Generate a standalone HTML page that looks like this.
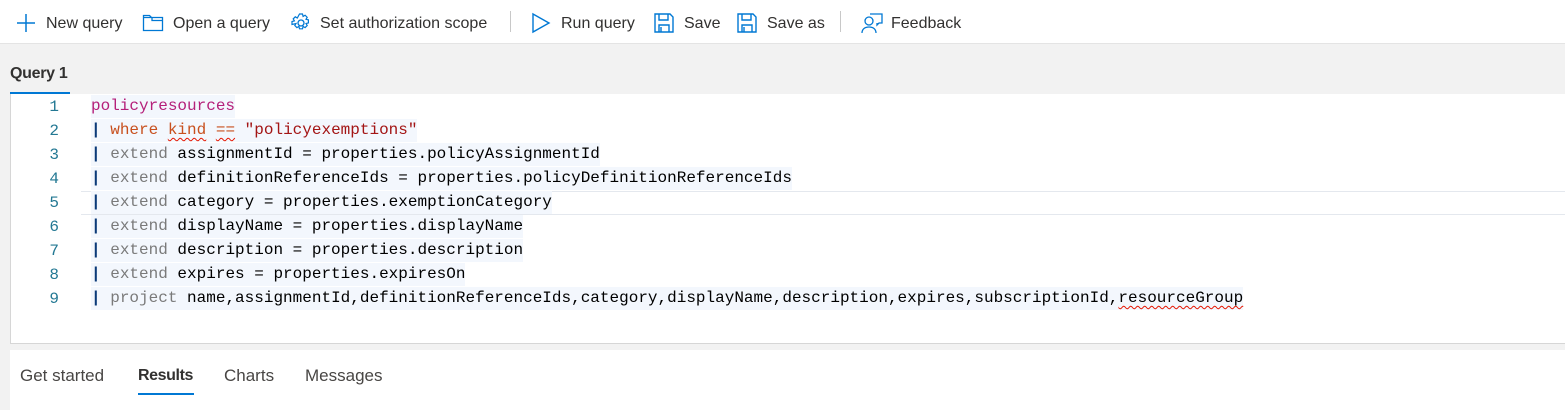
<!DOCTYPE html>
<html><head><meta charset="utf-8"><style>
*{margin:0;padding:0;box-sizing:border-box}
body{width:1565px;height:407px;background:#f2f2f2;position:relative;overflow:hidden;font-family:"Liberation Sans",sans-serif;color:#323130}
.tb{position:absolute;left:0;top:0;width:1565px;height:44px;background:#fff;border-bottom:1px solid #e4e4e4}
.it{position:absolute;top:15px;font-size:16px;color:#323130;white-space:nowrap}
.ic{position:absolute;top:12px}
.sep{position:absolute;top:11px;width:1px;height:21px;background:#c8c8c8}
.q1{position:absolute;left:10px;top:65px;font-size:16px;font-weight:bold;color:#323130;letter-spacing:-0.3px}
.q1u{position:absolute;left:10px;top:92px;width:60px;height:2px;background:#0078d4}
.ed{position:absolute;left:10px;top:94px;width:1560px;height:250px;background:#fff;border:1px solid #d6d6d6;border-top:none;border-right:none}
.ln{position:absolute;left:0;width:48px;text-align:right;font-family:"Liberation Mono",monospace;font-size:16px;color:#237893;line-height:24px}
.cl{position:absolute;left:80px;font-family:"Liberation Mono",monospace;font-size:16px;line-height:23px;white-space:pre;background:#f3f7fd;color:#000}
.cur{position:absolute;left:70px;right:0;top:97px;height:24px;border-top:1px solid #e4e8ee;border-bottom:1px solid #e4e8ee}
.p{color:#0b3a78;font-weight:bold}.g{color:#7a7a7a}.k{color:#b5207a}.o{color:#c8501e}.s{color:#a31515}
.sq{text-decoration:underline wavy #e51400;text-decoration-thickness:1px;text-underline-offset:3px}
.bp{position:absolute;left:10px;top:350px;width:1560px;height:60px;background:#fff}
.bt{position:absolute;top:366px;font-size:17px;color:#484644}
.w{position:absolute;left:0;top:1px;right:0;bottom:0}
</style></head><body>
<div class="tb">
<svg class="ic" style="left:15px" width="22" height="22" viewBox="0 0 22 22"><path d="M11 2v18M2 11h18" stroke="#0078d4" stroke-width="1.5"/></svg>
<span class="it" style="left:46px">New query</span>
<svg class="ic" style="left:142px" width="22" height="22" viewBox="0 0 22 22"><path d="M1.5 5.5h19v13h-19zM1.5 5.5v-2h6l2 2M10 5.5v3h10.5" fill="none" stroke="#0078d4" stroke-width="1.3"/></svg>
<span class="it" style="left:173px">Open a query</span>
<svg class="ic" style="left:290px" width="22" height="22" viewBox="0 0 22 22"><circle cx="11" cy="11" r="3" fill="none" stroke="#0078d4" stroke-width="1.3"/><path d="M9.5 2h3l.6 2.4 2-1.2 2.1 2.1-1.2 2 2.4.6v3l-2.4.6 1.2 2-2.1 2.1-2-1.2-.6 2.4h-3l-.6-2.4-2 1.2-2.1-2.1 1.2-2L2 12.5v-3l2.4-.6-1.2-2 2.1-2.1 2 1.2z" fill="none" stroke="#0078d4" stroke-width="1.2"/></svg>
<span class="it" style="left:320px">Set authorization scope</span>
<div class="sep" style="left:510px"></div>
<svg class="ic" style="left:530px" width="22" height="22" viewBox="0 0 22 22"><path d="M3 2l16 9-16 9z" fill="none" stroke="#0078d4" stroke-width="1.4"/></svg>
<span class="it" style="left:561px">Run query</span>
<svg class="ic" style="left:653px" width="22" height="22" viewBox="0 0 22 22"><path d="M2 2h15l3 3v15H2zM6 2v6h9V2M6 20v-7h10v7M8 15v5" fill="none" stroke="#0078d4" stroke-width="1.4"/></svg>
<span class="it" style="left:684px">Save</span>
<svg class="ic" style="left:736px" width="22" height="22" viewBox="0 0 22 22"><path d="M2 2h15l3 3v15H2zM6 2v6h9V2M6 20v-7h10v7M8 15v5" fill="none" stroke="#0078d4" stroke-width="1.4"/></svg>
<span class="it" style="left:767px">Save as</span>
<div class="sep" style="left:840px"></div>
<svg class="ic" style="left:860px" width="24" height="22" viewBox="0 0 24 22"><circle cx="9" cy="9" r="4" fill="none" stroke="#0078d4" stroke-width="1.3"/><path d="M2 21c0-4 3-6 7-6s7 2 7 6M10 2h12v9h-3l-2 2v-2" fill="none" stroke="#0078d4" stroke-width="1.3"/></svg>
<span class="it" style="left:891px">Feedback</span>
</div>
<div class="q1">Query 1</div><div class="q1u"></div>
<div class="ed">
<div class="cur"></div>
<div class="w">
<div class="ln" style="top:0">1</div><div class="ln" style="top:24px">2</div><div class="ln" style="top:48px">3</div><div class="ln" style="top:72px">4</div><div class="ln" style="top:96px">5</div><div class="ln" style="top:120px">6</div><div class="ln" style="top:144px">7</div><div class="ln" style="top:168px">8</div><div class="ln" style="top:192px">9</div>
<div class="cl" style="top:0"><span class="k">policyresources</span></div>
<div class="cl" style="top:24px"><span class="p">|</span> <span class="o">where <span class="sq">kind</span> <span class="sq">==</span></span> <span class="s">"policyexemptions"</span></div>
<div class="cl" style="top:48px"><span class="p">|</span> <span class="g">extend</span> assignmentId = properties.policyAssignmentId</div>
<div class="cl" style="top:72px"><span class="p">|</span> <span class="g">extend</span> definitionReferenceIds = properties.policyDefinitionReferenceIds</div>
<div class="cl" style="top:96px"><span class="p">|</span> <span class="g">extend</span> category = properties.exemptionCategory</div>
<div class="cl" style="top:120px"><span class="p">|</span> <span class="g">extend</span> displayName = properties.displayName</div>
<div class="cl" style="top:144px"><span class="p">|</span> <span class="g">extend</span> description = properties.description</div>
<div class="cl" style="top:168px"><span class="p">|</span> <span class="g">extend</span> expires = properties.expiresOn</div>
<div class="cl" style="top:192px"><span class="p">|</span> <span class="g">project</span> name,assignmentId,definitionReferenceIds,category,displayName,description,expires,subscriptionId,<span class="sq">resourceGroup</span></div>
</div>
</div>
<div class="bp"></div>
<span class="bt" style="left:20px">Get started</span>
<span class="bt" style="left:138px;font-weight:bold;color:#323130;font-size:16px;letter-spacing:-0.4px;top:367px">Results</span>
<div style="position:absolute;left:138px;top:393px;width:56px;height:2px;background:#0078d4"></div>
<span class="bt" style="left:224px">Charts</span>
<span class="bt" style="left:305px">Messages</span>
</body></html>
